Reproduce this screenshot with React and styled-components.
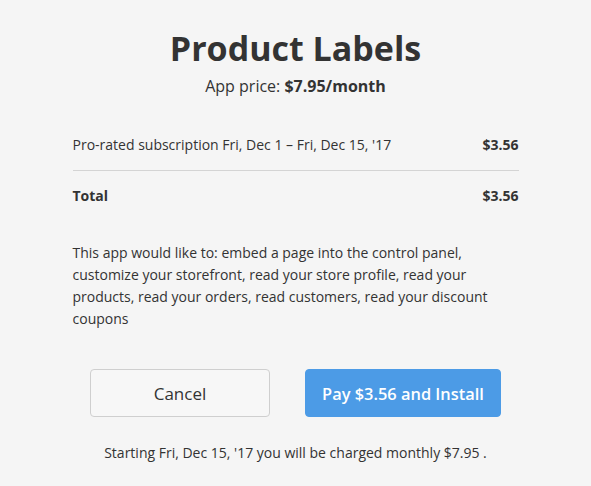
import React from "react";
import styled, { createGlobalStyle } from "styled-components";

const Global = createGlobalStyle`
  html, body { margin: 0; padding: 0; background: #f5f5f5; }
  body { font-family: "Open Sans", "Liberation Sans", sans-serif; color: #333; }
`;

const Page = styled.div`
  width: 591px;
  height: 486px;
  box-sizing: border-box;
  padding-top: 23px;
  display: flex;
  flex-direction: column;
  align-items: center;
`;

const Title = styled.h1`
  margin: 0;
  font-size: 34px;
  line-height: 50px;
  font-weight: 700;
  color: #333;
`;

const Subtitle = styled.div`
  font-size: 16px;
  line-height: 22px;
  margin-top: 2px;
  b { font-weight: 700; }
`;

const Table = styled.div`
  width: 446px;
  margin-top: 26px;
  display: flex;
  flex-direction: column;
`;

const Row = styled.div`
  display: flex;
  justify-content: space-between;
  align-items: center;
  font-size: 14px;
  line-height: 19px;
  padding: ${(p) => (p.$top ? "12px 0 16px" : "15px 0 0")};
  font-weight: ${(p) => (p.$bold ? 700 : 400)};
  border-bottom: ${(p) => (p.$divider ? "1px solid #d4d4d4" : "none")};
`;

const Amount = styled.span`
  font-weight: 700;
`;

const Permissions = styled.p`
  width: 446px;
  margin: 37px 0 0;
  font-size: 14px;
  line-height: 22px;
`;

const Buttons = styled.div`
  display: flex;
  gap: 35px;
  margin-top: 39px;
`;

const Button = styled.button`
  height: 48px;
  box-sizing: border-box;
  border-radius: 4px;
  font-family: inherit;
  cursor: pointer;
  width: ${(p) => (p.$primary ? "196px" : "180px")};
  background: ${(p) => (p.$primary ? "#4c9be6" : "#f7f7f7")};
  color: ${(p) => (p.$primary ? "#fff" : "#333")};
  border: 1px solid ${(p) => (p.$primary ? "#4c9be6" : "#cfcfcf")};
  font-weight: ${(p) => (p.$primary ? 600 : 400)};
  font-size: ${(p) => (p.$primary ? "16.4px" : "17px")};
`;

const Note = styled.div`
  margin-top: 26px;
  font-size: 14px;
  line-height: 19px;
`;

export default function App() {
  return (
    <>
      <Global />
      <Page>
        <Title>Product Labels</Title>
        <Subtitle>
          App price: <b>$7.95/month</b>
        </Subtitle>
        <Table>
          <Row $top $divider>
            <span>Pro-rated subscription Fri, Dec 1 – Fri, Dec 15, '17</span>
            <Amount>$3.56</Amount>
          </Row>
          <Row $bold>
            <span>Total</span>
            <Amount>$3.56</Amount>
          </Row>
        </Table>
        <Permissions>
          This app would like to: embed a page into the control panel, customize your storefront, read your store profile, read your products, read your orders, read customers, read your discount coupons
        </Permissions>
        <Buttons>
          <Button>Cancel</Button>
          <Button $primary>Pay $3.56 and Install</Button>
        </Buttons>
        <Note>Starting Fri, Dec 15, '17 you will be charged monthly $7.95 .</Note>
      </Page>
    </>
  );
}
